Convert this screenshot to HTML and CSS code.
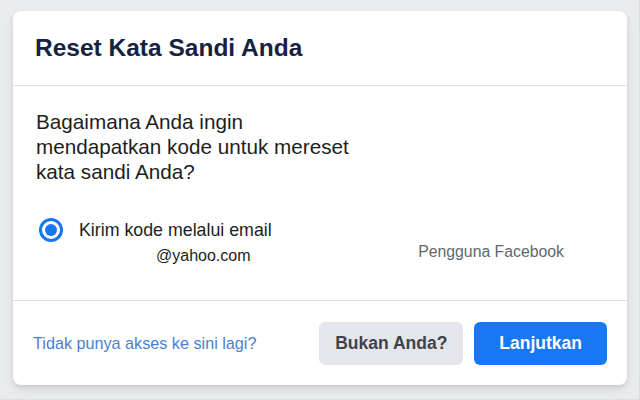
FILE: index.html
```html
<!DOCTYPE html>
<html lang="id">
<head>
<meta charset="utf-8">
<title>Reset Kata Sandi Anda</title>
<link rel="stylesheet" href="styles.css">
</head>
<body>
<div class="page">
  <div class="card">
    <div class="card-header">
      <h2 class="title">Reset Kata Sandi Anda</h2>
    </div>
    <div class="card-body">
      <p class="question">Bagaimana Anda ingin mendapatkan kode untuk mereset kata sandi Anda?</p>
      <div class="choices">
        <div class="option">
          <label class="option-row">
            <span class="radio"><span class="radio-dot"></span></span>
            <span class="option-label">Kirim kode melalui email</span>
          </label>
          <div class="email">@yahoo.com</div>
        </div>
        <div class="profile">Pengguna Facebook</div>
      </div>
    </div>
    <div class="card-footer">
      <a class="link" href="#">Tidak punya akses ke sini lagi?</a>
      <div class="actions">
        <button class="btn btn-secondary">Bukan Anda?</button>
        <button class="btn btn-primary">Lanjutkan</button>
      </div>
    </div>
  </div>
</div>
</body>
</html>
```
FILE: styles.css
```css
* { box-sizing: border-box; }
html, body { margin: 0; padding: 0; }
body {
  background: #e9ebee;
  font-family: "Liberation Sans", Arial, sans-serif;
  width: 640px;
  height: 400px;
  overflow: hidden;
}
.page {
  height: 400px;
  padding: 11px 13px 0 13px;
  border-right: 1px solid #dcdee3;
  border-bottom: 1px solid #dcdee3;
}
.card {
  width: 614px;
  height: 374px;
  background: #fff;
  border-radius: 8px;
  box-shadow: 0 2px 4px rgba(0,0,0,0.1), 0 6px 12px rgba(0,0,0,0.06);
  display: flex;
  flex-direction: column;
}
.card-header {
  height: 75px;
  border-bottom: 1px solid #dddfe2;
  display: flex;
  align-items: center;
  padding: 0 22px;
}
.title {
  margin: 0;
  font-size: 24.5px;
  font-weight: bold;
  color: #172240;
  line-height: 28px;
}
.card-body {
  height: 214px;
  padding: 23px 22px 0 23px;
}
.question {
  margin: 0;
  width: 335px;
  font-size: 20.7px;
  line-height: 25px;
  color: #1c1e21;
}
.choices {
  margin-top: 34px;
  display: flex;
  justify-content: space-between;
  align-items: flex-end;
  padding-right: 41px;
}
.option-row {
  display: flex;
  align-items: center;
  gap: 16px;
  margin-left: 3px;
}
.radio {
  width: 24px;
  height: 24px;
  border: 3px solid #1877f2;
  border-radius: 50%;
  display: flex;
  align-items: center;
  justify-content: center;
}
.radio-dot {
  width: 12px;
  height: 12px;
  border-radius: 50%;
  background: #1877f2;
}
.option-label {
  font-size: 17.8px;
  line-height: 24px;
  color: #1c1e21;
}
.email {
  margin: 4px 0 0 120px;
  font-size: 16px;
  line-height: 20px;
  color: #1c1e21;
}
.profile {
  font-size: 15.8px;
  line-height: 20px;
  color: #606770;
  padding-bottom: 4px;
}
.card-footer {
  height: 85px;
  border-top: 1px solid #dddfe2;
  display: flex;
  align-items: center;
  justify-content: space-between;
  padding: 0 20px;
}
.link {
  font-size: 16.2px;
  color: #4a7fcf;
  text-decoration: none;
}
.actions {
  display: flex;
  gap: 11px;
}
.btn {
  height: 43px;
  border: none;
  border-radius: 6px;
  font-family: "Liberation Sans", Arial, sans-serif;
  font-size: 17.5px;
  font-weight: bold;
  cursor: pointer;
}
.btn-secondary {
  background: #e4e6eb;
  color: #3f434a;
  padding: 0 16px;
}
.btn-primary {
  background: #1877f2;
  color: #fff;
  padding: 0 25px;
}
```
